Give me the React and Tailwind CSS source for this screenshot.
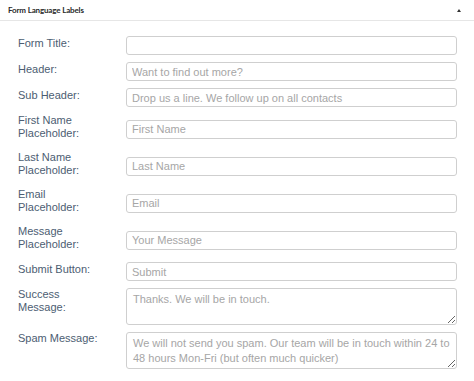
const FIELDS = [
  { label: "Form Title:", placeholder: "" },
  { label: "Header:", placeholder: "Want to find out more?" },
  { label: "Sub Header:", placeholder: "Drop us a line. We follow up on all contacts" },
  { label: ["First Name", "Placeholder:"], placeholder: "First Name" },
  { label: ["Last Name", "Placeholder:"], placeholder: "Last Name" },
  { label: ["Email", "Placeholder:"], placeholder: "Email" },
  { label: ["Message", "Placeholder:"], placeholder: "Your Message" },
  { label: "Submit Button:", placeholder: "Submit" },
  { label: ["Success", "Message:"], placeholder: "Thanks. We will be in touch.", area: true },
  {
    label: "Spam Message:",
    placeholder: "We will not send you spam. Our team will be in touch within 24 to 48 hours Mon-Fri (but often much quicker)",
    area: true,
  },
];

function Label({ text }) {
  const lines = Array.isArray(text) ? text : [text];
  return (
    <label className="block w-[108px] shrink-0 mb-[4px] text-[11px] leading-[13px] text-[#4c5d72]">
      {lines.map((l) => (
        <span key={l} className="block">
          {l}
        </span>
      ))}
    </label>
  );
}

export default function App() {
  return (
    <div className="w-[474px] h-[381px] bg-white font-['Liberation_Sans',Arial,sans-serif] overflow-hidden">
      <div className="h-[21px] flex items-center justify-between pl-[8px] pr-[13px] border-b border-[#e6e6e6]">
        <span className="font-['Lato',sans-serif] font-bold text-[8px] text-[#2a2a2a] tracking-[-0.15px]">
          Form Language Labels
        </span>
        <span className="w-0 h-0 border-l-[2.5px] border-r-[2.5px] border-b-[3px] border-l-transparent border-r-transparent border-b-[#333]" />
      </div>

      <form className="pt-[15px] pl-[18px] pr-[17px] flex flex-col gap-[7px]">
        {FIELDS.map((f, i) =>
          f.area ? (
            <div key={i} className="flex items-start">
              <Label text={f.label} />
              <textarea
                readOnly
                placeholder={f.placeholder}
                className="w-[331px] h-[37px] border border-[#cfcfcf] rounded-[3px] px-[6px] pt-[3px] text-[11px] leading-[15px] text-[#555] placeholder:text-[#a6a6a6] outline-none"
              />
            </div>
          ) : (
            <div key={i} className="flex items-center">
              <Label text={f.label} />
              <input
                readOnly
                placeholder={f.placeholder}
                className="w-[331px] h-[19px] border border-[#cfcfcf] rounded-[3px] px-[5px] text-[11px] text-[#555] placeholder:text-[#a6a6a6] outline-none"
              />
            </div>
          )
        )}
      </form>
    </div>
  );
}
